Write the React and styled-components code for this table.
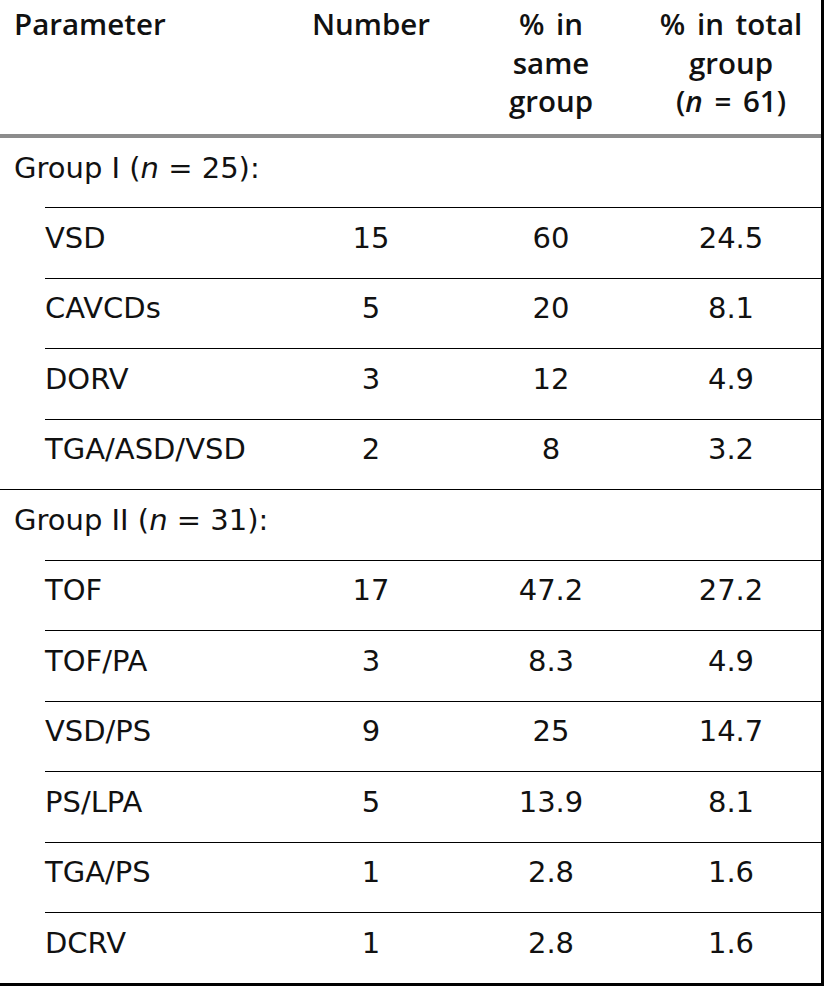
import React from "react";
import styled, { createGlobalStyle } from "styled-components";

const Global = createGlobalStyle`
  html, body { margin: 0; padding: 0; background: #fff; }
  body { font-family: "DejaVu Sans", "Open Sans", sans-serif; color: #111; }
`;

const Table = styled.div`
  width: 821px;
  border-right: 3px solid #000;
  border-bottom: 3px solid #000;
  font-size: 29px;
`;

const Header = styled.div`
  display: grid;
  grid-template-columns: 281px 180px 180px 180px;
  height: 134px;
  border-bottom: 4px solid #8c8c8c;
  box-sizing: content-box;
  font-family: "Open Sans", "DejaVu Sans", sans-serif;
  font-weight: 600;
  font-size: 29.5px;
  word-spacing: 4px;
`;

const HeadCell = styled.div`
  padding-top: 5px;
  padding-left: ${(p) => (p.$left ? "14px" : "0")};
  text-align: ${(p) => (p.$left ? "left" : "center")};
  line-height: 38.5px;
`;

const GroupRow = styled.div`
  display: flex;
  align-items: center;
  height: ${(p) => p.$h || "70.5px"};
  box-sizing: border-box;
  padding: 0 0 10px 14px;
  border-top: ${(p) => (p.$line ? "1px solid #000" : "none")};
`;

const SubRow = styled.div`
  display: grid;
  grid-template-columns: 236px 180px 180px 180px;
  margin-left: 45px;
  height: 70.5px;
  box-sizing: border-box;
  border-top: 1px solid #000;
  align-items: center;
  padding-bottom: 10px;
`;

const Cell = styled.div`
  text-align: ${(p) => (p.$left ? "left" : "center")};
  white-space: nowrap;
`;

const group1 = [
  ["VSD", "15", "60", "24.5"],
  ["CAVCDs", "5", "20", "8.1"],
  ["DORV", "3", "12", "4.9"],
  ["TGA/ASD/VSD", "2", "8", "3.2"],
];

const group2 = [
  ["TOF", "17", "47.2", "27.2"],
  ["TOF/PA", "3", "8.3", "4.9"],
  ["VSD/PS", "9", "25", "14.7"],
  ["PS/LPA", "5", "13.9", "8.1"],
  ["TGA/PS", "1", "2.8", "1.6"],
  ["DCRV", "1", "2.8", "1.6"],
];

const Rows = ({ data }) =>
  data.map((r) => (
    <SubRow key={r[0]}>
      <Cell $left>{r[0]}</Cell>
      <Cell>{r[1]}</Cell>
      <Cell>{r[2]}</Cell>
      <Cell>{r[3]}</Cell>
    </SubRow>
  ));

export default function App() {
  return (
    <>
      <Global />
      <Table>
        <Header>
          <HeadCell $left>Parameter</HeadCell>
          <HeadCell>Number</HeadCell>
          <HeadCell>
            % in
            <br />
            same
            <br />
            group
          </HeadCell>
          <HeadCell>
            % in total
            <br />
            group
            <br />(<i>n</i> = 61)
          </HeadCell>
        </Header>
        <GroupRow $h="69px">
          Group I (<i>n</i>&nbsp;= 25):
        </GroupRow>
        <Rows data={group1} />
        <GroupRow $line>
          Group II (<i>n</i>&nbsp;= 31):
        </GroupRow>
        <Rows data={group2} />
      </Table>
    </>
  );
}
